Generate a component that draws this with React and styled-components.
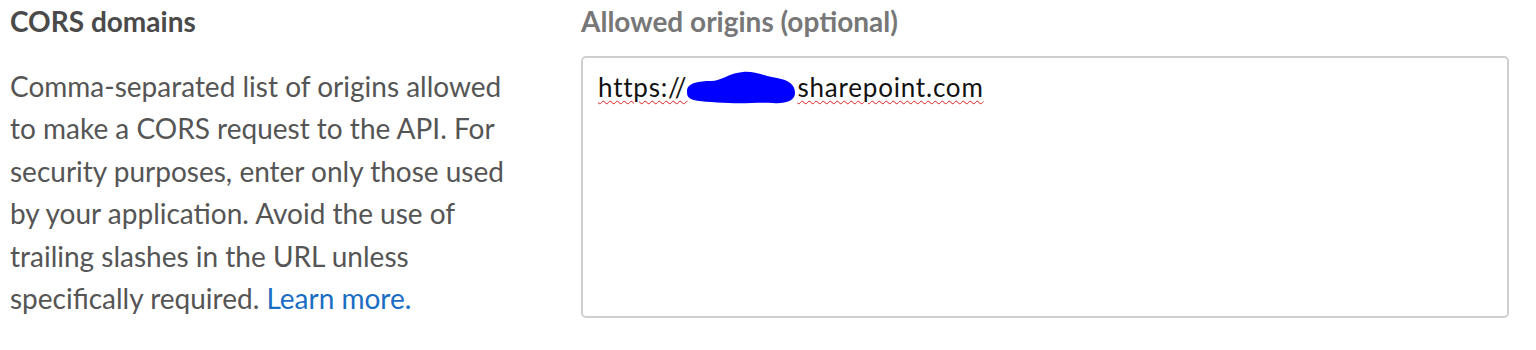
import styled, { createGlobalStyle } from "styled-components";

const GlobalStyle = createGlobalStyle`
    body {
        margin: 0;
        background: #fff;
        font-family: Lato, "Open Sans", sans-serif;
    }
`;

const App = () => {
    return (
        <>
            <GlobalStyle />
            <Wrapper>
                <div className="info">
                    <h4>CORS domains</h4>
                    <p>
                        Comma-separated list of origins allowed<br />
                        to make a CORS request to the API. For<br />
                        security purposes, enter only those used<br />
                        by your application. Avoid the use of<br />
                        trailing slashes in the URL unless<br />
                        specifically required. <a href="#learn">Learn more.</a>
                    </p>
                </div>
                <div className="field">
                    <label>Allowed origins (optional)</label>
                    <Origins>
                        <span className="typo">https://</span>
                        <Blob viewBox="0 0 112 36" aria-hidden="true">
                            <path
                                d="M2 22 C2 14 14 12 26 12 C36 12 44 4 58 3 C70 2 80 7 92 9 C104 11 110 16 110 24 C110 32 100 35 88 34 C74 33 60 35 44 34 C28 33 12 33 6 30 C2 28 2 25 2 22 Z"
                                fill="#0000ff"
                            />
                        </Blob>
                        <span className="typo">sharepoint.com</span>
                    </Origins>
                </div>
            </Wrapper>
        </>
    );
};

const Wrapper = styled.section`
    display: flex;
    gap: 71px;
    padding: 4px 27px 0 10px;

    .info {
        width: 500px;
        flex-shrink: 0;
    }

    h4 {
        margin: 0;
        font-size: 28px;
        font-weight: 700;
        color: #4a4a4a;
        line-height: 34px;
    }

    p {
        margin: 27px 0 0;
        font-size: 28px;
        line-height: 42.4px;
        color: #555;
        white-space: nowrap;
    }

    a {
        color: #1a6dc4;
        text-decoration: none;
    }

    .field {
        flex: 1;
        display: flex;
        flex-direction: column;
        gap: 18px;
    }

    label {
        font-size: 28px;
        font-weight: 700;
        color: #777;
        line-height: 34px;
    }
`;

const Origins = styled.div`
    height: 262px;
    border: 2px solid #cfcfcf;
    border-radius: 5px;
    padding: 11px 15px;
    font-size: 26px;
    letter-spacing: 0.8px;
    line-height: 34px;
    color: #111;
    display: flex;
    align-items: center;
    align-content: flex-start;
    flex-wrap: wrap;
    box-sizing: border-box;

    .typo {
        text-decoration: underline wavy #e02020;
        text-decoration-thickness: 1px;
        text-underline-offset: 3px;
    }
`;

const Blob = styled.svg`
    width: 112px;
    height: 36px;
    margin: 0 0 0 -2px;
`;

export default App;
